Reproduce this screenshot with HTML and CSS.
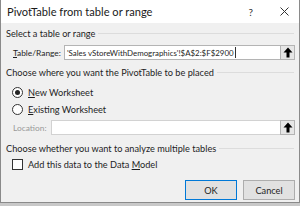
FILE: index.html
```html
<!DOCTYPE html>
<html>
<head>
<meta charset="utf-8">
<link rel="stylesheet" href="styles.css">
</head>
<body>
<div class="dialog">
  <div class="titlebar">
    <span class="title">PivotTable from table or range</span>
    <span class="help">?</span>
    <svg class="close" width="9" height="9" viewBox="0 0 9 9"><path d="M0.5 0.5 L8.5 8.5 M8.5 0.5 L0.5 8.5" stroke="#333" stroke-width="1" fill="none"/></svg>
  </div>
  <div class="content">
    <div class="group g1"><span>Select a table or range</span><span class="rule"></span></div>
    <div class="field f1">
      <span class="label"><u>T</u>able/Range:</span>
      <div class="input">'Sales vStoreWithDemographics'!$A$2:$F$2900<span class="caret"></span></div>
      <div class="pick"><svg width="10" height="11" viewBox="0 0 10 11"><path d="M5 0.5 L9.5 5.5 L6.5 5.5 L6.5 10.5 L3.5 10.5 L3.5 5.5 L0.5 5.5 Z" fill="#000"/></svg></div>
    </div>
    <div class="group g2"><span>Choose where you want the PivotTable to be placed</span><span class="rule"></span></div>
    <div class="opt o1"><span class="radio on"></span><span><u>N</u>ew Worksheet</span></div>
    <div class="opt o2"><span class="radio"></span><span><u>E</u>xisting Worksheet</span></div>
    <div class="field f2">
      <span class="label dim">Location:</span>
      <div class="input loc"></div>
      <div class="pick"><svg width="10" height="11" viewBox="0 0 10 11"><path d="M5 0.5 L9.5 5.5 L6.5 5.5 L6.5 10.5 L3.5 10.5 L3.5 5.5 L0.5 5.5 Z" fill="#000"/></svg></div>
    </div>
    <div class="group g3"><span>Choose whether you want to analyze multiple tables</span><span class="rule"></span></div>
    <div class="opt o3"><span class="check"></span><span>Add this data to the Data <u>M</u>odel</span></div>
    <div class="buttons">
      <div class="btn ok">OK</div>
      <div class="btn">Cancel</div>
    </div>
  </div>
</div>
</body>
</html>
```

FILE: styles.css
```css
html, body {
  margin: 0;
  padding: 0;
}
body {
  width: 300px;
  height: 206px;
  background: #c8c8c8;
  font-family: "Lato", "Noto Sans", sans-serif;
  font-size: 9.2px;
  color: #1e1e1e;
  overflow: hidden;
}
.dialog {
  width: 298px;
  height: 202px;
  border: 1px solid #8a8a8a;
  border-top: none;
  background: #f0f0f0;
  display: flex;
  flex-direction: column;
}
.titlebar {
  height: 23px;
  background: #fff;
  display: flex;
  align-items: center;
  padding-left: 6px;
}
.title {
  font-size: 11.1px;
  color: #1a1a1a;
  flex: 1;
}
.help {
  font-size: 10px;
  color: #333;
  margin-right: 27px;
}
.close {
  margin-right: 10px;
}
.content {
  display: flex;
  flex-direction: column;
  padding: 0 4px 0 5px;
}
.group {
  display: flex;
  align-items: center;
  height: 14px;
  white-space: nowrap;
}
.rule {
  flex: 1;
  border-top: 1px solid #dcdcdc;
  margin-left: 3px;
  margin-right: 1px;
}
.g1 { margin-top: 3px; }
.g2 { margin-top: 5px; }
.g3 { margin-top: 6px; }
.field {
  display: flex;
  align-items: center;
  height: 15px;
  padding-left: 7px;
}
.f1 { margin-top: 5px; }
.f2 { margin-top: 4px; }
.label {
  white-space: nowrap;
  flex-shrink: 0;
  font-size: 8.4px;
}
.f1 .label { width: 51px; }
.f2 .label { width: 38px; }
.dim { color: #9a9a9a; }
.input {
  flex: 1;
  height: 13px;
  background: #fff;
  border: 1px solid #b4b4b4;
  border-right: none;
  display: flex;
  align-items: center;
  padding-left: 2px;
  white-space: nowrap;
  overflow: hidden;
  font-size: 7.9px;
}
.loc { border-color: #d2d2d2; }
.caret {
  display: inline-block;
  width: 1px;
  height: 11px;
  background: #333;
  margin-left: 1px;
}
.pick {
  width: 13px;
  height: 13px;
  border: 1px solid #b4b4b4;
  background: #e6e6e6;
  display: flex;
  align-items: center;
  justify-content: center;
  flex-shrink: 0;
}
.opt {
  display: flex;
  align-items: center;
  height: 14px;
  padding-left: 6px;
  white-space: nowrap;
}
.o1 { margin-top: 6px; }
.o2 { margin-top: 3px; }
.o3 { margin-top: 2px; height: 15px; }
.radio {
  width: 9px;
  height: 9px;
  border: 1px solid #333;
  border-radius: 50%;
  background: #fff;
  margin-right: 5px;
  display: flex;
  align-items: center;
  justify-content: center;
}
.radio.on::after {
  content: "";
  width: 5px;
  height: 5px;
  border-radius: 50%;
  background: #222;
}
.check {
  width: 9px;
  height: 9px;
  border: 1px solid #333;
  background: #fff;
  margin-right: 5px;
}
.buttons {
  display: flex;
  justify-content: flex-end;
  gap: 6px;
  margin-top: 8px;
}
.btn {
  width: 50px;
  height: 18px;
  border: 1px solid #adadad;
  background: #e1e1e1;
  display: flex;
  align-items: center;
  justify-content: center;
}
.btn.ok {
  border-color: #0078d7;
}
```
